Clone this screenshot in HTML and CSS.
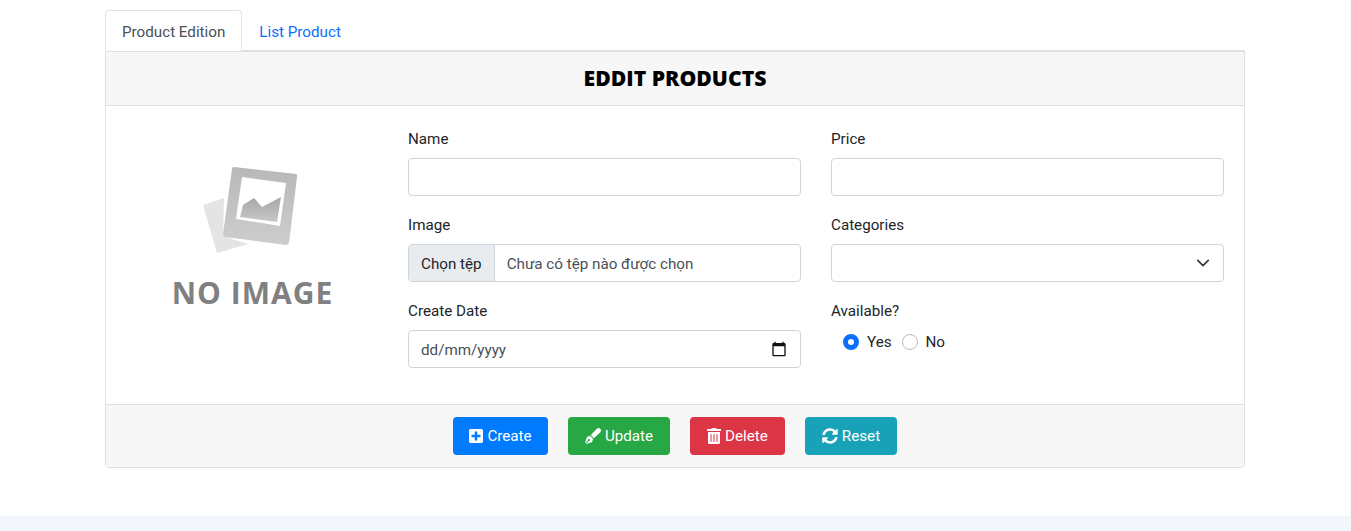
FILE: index.html
```html
<!DOCTYPE html>
<html lang="vi">
<head>
  <meta charset="UTF-8">
  <title>Edit Products</title>
  <meta name="viewport" content="width=device-width, initial-scale=1.0">
  <link rel="stylesheet" href="styles.css">
</head>
<body>
  <div class="page">
    <div class="container">
      <ul class="tabs">
        <li class="tab active">Product Edition</li>
        <li class="tab">List Product</li>
      </ul>

      <div class="card">
        <div class="card-header">EDDIT PRODUCTS</div>

        <div class="card-body">
          <div class="no-image">
            <svg class="no-image-icon" width="96" height="90" viewBox="0 0 96 90">
              <defs>
                <linearGradient id="frame" x1="0" y1="0" x2="0" y2="1">
                  <stop offset="0" stop-color="#b8b8b8"/>
                  <stop offset="1" stop-color="#cdcdcd"/>
                </linearGradient>
                <linearGradient id="hill" x1="0" y1="0" x2="0" y2="1">
                  <stop offset="0" stop-color="#a6a6a6"/>
                  <stop offset="1" stop-color="#c8c8c8"/>
                </linearGradient>
              </defs>
              <path d="M0 39 L21 32 L20 70 L45 78 L14 87 Z" fill="#e4e4e4"/>
              <path d="M31 1 L93 8 Q95 9 94 11 L86 77 Q85 79 83 79 L22 71 Q20 70 20 68 L29 3 Q29 1 31 1 Z" fill="url(#frame)"/>
              <path d="M39 11 L83 17 L77 60 L33 53 Z" fill="#fff"/>
              <path d="M37 51 L40 39 L51 32 L59 41 L78 31 L74 56 Z" fill="url(#hill)"/>
            </svg>
            <span class="no-image-text">NO IMAGE</span>
          </div>

          <form class="fields">
            <div class="field">
              <label class="field-label">Name</label>
              <input class="control" type="text">
            </div>
            <div class="field">
              <label class="field-label">Price</label>
              <input class="control" type="text">
            </div>
            <div class="field">
              <label class="field-label">Image</label>
              <div class="control file-control">
                <span class="file-btn">Chọn tệp</span>
                <span class="file-name">Chưa có tệp nào được chọn</span>
              </div>
            </div>
            <div class="field">
              <label class="field-label">Categories</label>
              <div class="control select-control">
                <svg width="14" height="14" viewBox="0 0 16 16"><path fill="none" stroke="#343a40" stroke-linecap="round" stroke-linejoin="round" stroke-width="2" d="M2 5l6 6 6-6"/></svg>
              </div>
            </div>
            <div class="field">
              <label class="field-label">Create Date</label>
              <div class="control date-control">
                <span class="date-text">dd/mm/yyyy</span>
                <svg width="16" height="16" viewBox="0 0 24 24"><path d="M20 3h-1V1h-2v2H7V1H5v2H4c-1.100 0-2 .9-2 2v16c0 1.100.9 2 2 2h16c1.100 0 2-.9 2-2V5c0-1.100-.9-2-2-2zm0 18H4V8h16v13z" fill="#111"/></svg>
              </div>
            </div>
            <div class="field">
              <label class="field-label">Available?</label>
              <div class="radios">
                <label class="radio"><input type="radio" name="available" checked> Yes</label>
                <label class="radio"><input type="radio" name="available"> No</label>
              </div>
            </div>
          </form>
        </div>

        <div class="card-footer">
          <button class="btn btn-create" type="button">
            <svg class="btn-icon" width="14" height="16" viewBox="0 0 448 512"><path d="M400 32H48C21.500 32 0 53.500 0 80v352c0 26.500 21.500 48 48 48h352c26.500 0 48-21.500 48-48V80c0-26.500-21.500-48-48-48zm-32 252c0 6.600-5.400 12-12 12h-92v92c0 6.600-5.400 12-12 12h-56c-6.600 0-12-5.400-12-12v-92H92c-6.600 0-12-5.400-12-12v-56c0-6.600 5.400-12 12-12h92v-92c0-6.600 5.400-12 12-12h56c6.600 0 12 5.400 12 12v92h92c6.600 0 12 5.400 12 12v56z"/></svg>
            Create
          </button>
          <button class="btn btn-update" type="button">
            <svg class="btn-icon" width="16" height="16" viewBox="0 0 512 512"><path d="M79.180 282.940a32 32 0 0 0-20.240 20.240L0 480l4.690 4.690 92.890-92.890c-.66-2.560-1.570-5.030-1.570-7.800 0-17.670 14.330-32 32-32s32 14.330 32 32-14.330 32-32 32c-2.770 0-5.240-.91-7.800-1.570l-92.890 92.890L32 512l176.820-58.940a32 32 0 0 0 20.240-20.240l33.070-84.070-98.880-98.880-84.070 33.070zM369.250 28.320L186.140 227.810l97.850 97.850 199.490-183.110c34.890-31.310 36.200-82.940 3.050-116.080-33.150-33.160-84.460-31.360-117.280 1.850z"/></svg>
            Update
          </button>
          <button class="btn btn-delete" type="button">
            <svg class="btn-icon" width="14" height="16" viewBox="0 0 448 512"><path d="M32 464a48 48 0 0 0 48 48h288a48 48 0 0 0 48-48V128H32zm272-256a16 16 0 0 1 32 0v224a16 16 0 0 1-32 0zm-96 0a16 16 0 0 1 32 0v224a16 16 0 0 1-32 0zm-96 0a16 16 0 0 1 32 0v224a16 16 0 0 1-32 0zM432 32H312l-9.400-18.700A24 24 0 0 0 281.100 0H166.800a23.720 23.720 0 0 0-21.400 13.300L136 32H16A16 16 0 0 0 0 48v32a16 16 0 0 0 16 16h416a16 16 0 0 0 16-16V48a16 16 0 0 0-16-16z"/></svg>
            Delete
          </button>
          <button class="btn btn-reset" type="button">
            <svg class="btn-icon" width="16" height="16" viewBox="0 0 512 512"><path d="M370.720 133.280C339.458 104.008 298.888 87.962 255.848 88c-77.458.068-144.328 53.178-162.791 126.850-1.344 5.363-6.122 9.150-11.651 9.150H24.103c-7.498 0-13.194-6.807-11.807-14.176C33.933 94.924 134.813 8 256 8c66.448 0 126.791 26.136 171.315 68.685L463.030 40.970C478.149 25.851 504 36.559 504 57.941V192c0 13.255-10.745 24-24 24H345.941c-21.382 0-32.090-25.851-16.971-40.971l41.750-41.749zM32 296h134.059c21.382 0 32.090 25.851 16.971 40.971l-41.750 41.750c31.262 29.273 71.835 45.319 114.876 45.280 77.418-.07 144.315-53.144 162.787-126.849 1.344-5.363 6.122-9.150 11.651-9.150h57.304c7.498 0 13.194 6.807 11.807 14.176C478.067 417.076 377.187 504 256 504c-66.448 0-126.791-26.136-171.315-68.685L48.970 471.030C33.851 486.149 8 475.441 8 454.059V320c0-13.255 10.745-24 24-24z"/></svg>
            Reset
          </button>
        </div>
      </div>
    </div>
  </div>
</body>
</html>
```

FILE: styles.css
```css
* { box-sizing: border-box; }
html, body { margin: 0; height: 100%; }
body { font-family: Roboto, "Noto Sans", sans-serif; font-size: 15.2px; color: #212529; background: #f3f6fb; overflow: hidden; }

.page { width: 1350px; height: 516px; background: #fff; padding-top: 10px; }
.container { width: 1140px; margin: 0 auto; }

.tabs { display: flex; list-style: none; margin: 0; padding: 0; height: 41px; border-bottom: 1px solid #dee2e6; }
.tab { height: 41px; padding: 1px 16px 0; line-height: 40px; color: #0d6efd; border: 1px solid transparent; border-radius: 4px 4px 0 0; }
.tab.active { color: #495057; background: #fff; border-color: #dee2e6 #dee2e6 #fff; }

.card { border: 1px solid #dfdfdf; border-radius: 0 0 4px 4px; }
.card-header { height: 54px; line-height: 52px; text-align: center; font-family: "Open Sans", sans-serif; font-size: 21.2px; font-weight: 800; color: #000; background: #f7f7f7; border-bottom: 1px solid #dfdfdf; }
.card-body { display: flex; padding: 20px 20px 20px 0; height: 298px; }
.card-footer { display: flex; justify-content: center; gap: 20px; height: 63px; padding-top: 12px; background: #f7f7f7; border-top: 1px solid #dfdfdf; border-radius: 0 0 4px 4px; }

.no-image { width: 293px; margin-right: 9px; display: flex; flex-direction: column; align-items: center; padding-top: 40px; flex-shrink: 0; }
.no-image-icon { display: block; margin-left: -4px; }
.no-image-text { margin-top: 17px; font-family: "Open Sans", sans-serif; font-size: 30px; font-weight: 700; line-height: 40px; letter-spacing: 1px; color: #808080; }

.fields { display: grid; grid-template-columns: 393px 393px; column-gap: 30px; align-content: start; }
.field { height: 86px; }
.field-label { display: block; height: 24px; padding-top: 1px; line-height: 24px; margin-bottom: 8px; }
.control { display: block; width: 100%; height: 38px; background: #fff; border: 1px solid #ced4da; border-radius: 4px; font: inherit; }

.file-control { display: flex; align-items: center; overflow: hidden; }
.file-btn { height: 100%; padding: 1px 12px 0; line-height: 36px; background: #e9ecef; border-right: 1px solid #ced4da; }
.file-name { padding: 1px 0 0 12px; color: #495057; }

.select-control { display: flex; align-items: center; justify-content: flex-end; padding-right: 13px; }
.date-control { display: flex; align-items: center; justify-content: space-between; padding: 0 13px 0 12px; }
.date-text { padding-top: 1px; color: #495057; }

.radios { display: flex; gap: 12px; padding: 0 12px; margin-top: 3px; }
.radio { display: flex; align-items: center; gap: 8px; height: 24px; }
.radio + .radio { margin-left: -2px; }
.radio input { appearance: none; width: 16px; height: 16px; margin: 0; border: 1px solid #bbb; border-radius: 50%; background: #fff; }
.radio input:checked { border: 5px solid #0d6efd; }

.btn { display: flex; align-items: center; justify-content: center; gap: 4px; height: 38px; padding: 0 16px; font: inherit; color: #fff; border: 0; border-radius: 4px; }
.btn-icon { fill: #fff; display: block; }
.btn-create { width: 95px; background: #007bff; }
.btn-update { width: 102px; background: #28a745; }
.btn-delete { width: 95px; background: #dc3545; }
.btn-reset { width: 92px; background: #17a2b8; }
```
